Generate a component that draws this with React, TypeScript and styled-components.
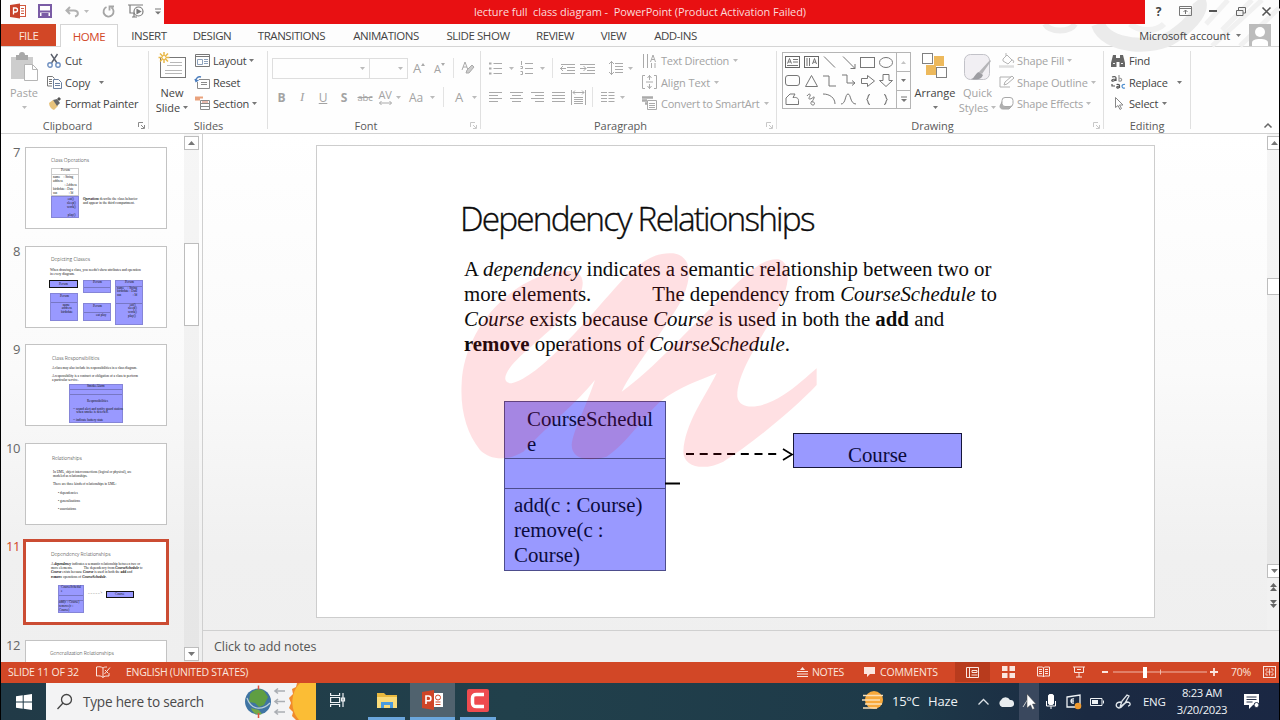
import React from "react";
import styled, { createGlobalStyle } from "styled-components";

const UI = `"Open Sans", "Noto Sans", "Liberation Sans", sans-serif`;
const SERIF = `"Liberation Serif", "Times New Roman", serif`;
const ORANGE = "#d24726";
const DIM = "#a3a3a3";
const INK = "#444444";

const Global = createGlobalStyle`
  * { box-sizing: border-box; }
  html, body { margin: 0; padding: 0; background: #000; overflow: hidden; }
  svg { display: block; flex: none; overflow: visible; }
`;

const Screen = styled.div`
  width: 1280px;
  height: 720px;
  padding: 0 1px;
  background: #000;
  display: flex;
  flex-direction: column;
  overflow: hidden;
  font-family: ${UI};
  font-size: 11px;
  letter-spacing: -0.2px;
  color: ${INK};
  white-space: nowrap;
`;

/* ---------- title bar and tabs ---------- */

const Header = styled.header`
  position: relative;
  background: #fdfdfd;
  height: 47px;
  flex: none;
  border-bottom: 1px solid #d5d5d5;
`;
const Swirls = styled.svg`
  position: absolute;
  left: 0;
  top: 0;
`;
const TitleRow = styled.div`
  position: relative;
  display: flex;
  height: 24px;
`;
const QuickAccess = styled.div`
  width: 163px;
  flex: none;
  display: flex;
  align-items: center;
  height: 22px;
`;
const IconCell = styled.div<{ $w: number; $h?: number; $bg?: string }>`
  width: ${(p) => p.$w}px;
  height: ${(p) => (p.$h ? `${p.$h}px` : "auto")};
  background: ${(p) => p.$bg || "transparent"};
  flex: none;
  display: flex;
  align-items: center;
  justify-content: center;
`;
const Gap = styled.div<{ $w: number }>`
  width: ${(p) => p.$w}px;
  flex: none;
`;
const TitleBanner = styled.div`
  width: 981px;
  flex: none;
  height: 24px;
  background: #e81012;
  color: #fbdada;
  display: flex;
  align-items: center;
  justify-content: center;
  padding: 0 29px 2px 0;
  font-size: 11px;
  letter-spacing: -0.08px;
  white-space: pre;
`;
const WindowButtons = styled.div`
  display: flex;
  align-items: center;
  height: 22px;
`;
const TabRow = styled.div`
  position: relative;
  display: flex;
  height: 23px;
`;
const Tab = styled.div<{ $w: number; $kind?: "file" | "active" }>`
  width: ${(p) => p.$w}px;
  height: ${(p) => (p.$kind === "file" ? 22 : 23)}px;
  flex: none;
  display: flex;
  align-items: center;
  justify-content: center;
  font-size: 11.5px;
  letter-spacing: -0.45px;
  color: ${(p) => (p.$kind === "file" ? "#fbe3dc" : p.$kind === "active" ? ORANGE : "#444")};
  background: ${(p) => (p.$kind === "file" ? ORANGE : p.$kind === "active" ? "#fff" : "transparent")};
  border: ${(p) => (p.$kind === "active" ? "1px solid #d5d5d5" : "0 solid transparent")};
  border-bottom: 0;
  margin-right: ${(p) => (p.$kind === "file" ? 4 : 0)}px;
`;
const Account = styled.div`
  margin-left: auto;
  display: flex;
  align-items: center;
  gap: 6px;
  letter-spacing: -0.08px;
  padding-bottom: 1px;
`;
const Avatar = styled.div`
  width: 32px;
  height: 22px;
  padding-left: 2px;
`;

/* ---------- ribbon ---------- */

const Ribbon = styled.div`
  height: 87px;
  flex: none;
  background: #fefefe;
  border-bottom: 1px solid #d2d2d2;
  display: flex;
`;
const Group = styled.section<{ $w: number }>`
  width: ${(p) => p.$w}px;
  flex: none;
  display: flex;
  flex-direction: column;
  position: relative;
  &::after {
    content: "";
    position: absolute;
    right: 0;
    top: 4px;
    bottom: 4px;
    width: 1px;
    background: #e0e0e0;
  }
`;
const GroupBody = styled.div`
  height: 69px;
  flex: none;
  padding-top: 3px;
  display: flex;
`;
const GroupCaption = styled.div<{ $shift?: number }>`
  height: 17px;
  flex: none;
  line-height: 20px;
  display: flex;
  justify-content: center;
  color: #5a5a5a;
  letter-spacing: -0.05px;
  padding-right: ${(p) => p.$shift || 0}px;
`;
const Launcher = styled.svg`
  position: absolute;
  right: 4px;
  bottom: 4px;
`;
const BigButton = styled.div<{ $w: number; $dim?: boolean }>`
  width: ${(p) => p.$w}px;
  flex: none;
  color: ${(p) => (p.$dim ? DIM : INK)};
  display: flex;
  flex-direction: column;
  align-items: center;
  letter-spacing: 0;
`;
const BigIcon = styled.div`
  height: 36px;
  padding-top: 2px;
`;
const BigText = styled.div`
  height: 14.5px;
  line-height: 14px;
  display: flex;
  align-items: center;
  gap: 3px;
`;
const Stack = styled.div<{ $ml?: number; $dim?: boolean }>`
  display: flex;
  flex-direction: column;
  margin-left: ${(p) => p.$ml || 0}px;
  color: ${(p) => (p.$dim ? DIM : INK)};
`;
const SmallButton = styled.div<{ $gap?: number; $ls?: number }>`
  height: 21.4px;
  display: flex;
  align-items: center;
  gap: ${(p) => p.$gap ?? 4}px;
  letter-spacing: ${(p) => p.$ls ?? -0.2}px;
`;
const SmallIcon = styled.div`
  width: 18px;
  flex: none;
`;
const Lines = styled.div<{ $pl: number }>`
  padding-left: ${(p) => p.$pl}px;
  display: flex;
  flex-direction: column;
`;
const ToolLine = styled.div<{ $h: number }>`
  height: ${(p) => p.$h}px;
  display: flex;
  align-items: center;
  color: ${DIM};
`;
const Combo = styled.div<{ $w: number }>`
  width: ${(p) => p.$w}px;
  height: 21px;
  border: 1px solid #dedede;
  margin-right: -1px;
  display: flex;
  align-items: center;
  justify-content: flex-end;
  padding-right: 4px;
`;
const Glyph = styled.span<{ $b?: boolean; $i?: boolean; $u?: boolean; $strike?: boolean; $size?: number }>`
  font-size: ${(p) => p.$size || 12}px;
  font-weight: ${(p) => (p.$b ? 700 : 400)};
  font-style: ${(p) => (p.$i ? "italic" : "normal")};
  font-family: ${(p) => (p.$i ? SERIF : UI)};
  text-decoration: ${(p) => (p.$u ? "underline" : p.$strike ? "line-through" : "none")};
`;
const Spacing = styled.div`
  display: flex;
  flex-direction: column;
  align-items: center;
  line-height: 10px;
  gap: 1px;
`;
const VRule = styled.div<{ $ml: number; $mr: number }>`
  width: 1px;
  height: 20px;
  background: #e3e3e3;
  flex: none;
  margin: 0 ${(p) => p.$mr}px 0 ${(p) => p.$ml}px;
`;
const Gallery = styled.div`
  width: 129px;
  height: 57px;
  margin: 2px 0 0 5px;
  border: 1px solid #b5b5b5;
  display: flex;
  flex: none;
`;
const ShapeGrid = styled.div`
  width: 113px;
  display: grid;
  grid-template-columns: repeat(6, 18.8px);
  grid-template-rows: 18px 19px 18px;
  place-items: center;
`;
const GalleryScroll = styled.div`
  flex: 1;
  display: grid;
  grid-template-rows: 1fr 1fr 1fr;
`;
const GalleryButton = styled.div`
  border-left: 1px solid #b5b5b5;
  display: flex;
  align-items: center;
  justify-content: center;
  & + & { border-top: 1px solid #b5b5b5; }
`;
const RibbonEnd = styled.div`
  flex: 1;
  display: flex;
  justify-content: flex-end;
  align-items: flex-end;
  padding: 0 7px 5px 0;
`;

/* ---------- workspace ---------- */

const Workspace = styled.div`
  height: 528px;
  flex: none;
  display: flex;
  background: linear-gradient(#ffffff, #fafafa 45%, #f0f0f0 80%, #efefef);
`;
const ThumbPanel = styled.aside`
  width: 183px;
  height: 528px;
  overflow: hidden;
  padding-top: 13px;
  display: flex;
  flex-direction: column;
  gap: 16.5px;
`;
const ThumbRow = styled.div`
  display: flex;
  height: 82px;
  flex: none;
`;
const ThumbNo = styled.div<{ $on?: boolean }>`
  width: 19px;
  margin-right: 5px;
  text-align: right;
  font-size: 13px;
  line-height: 14px;
  margin-top: -2px;
  letter-spacing: -0.4px;
  color: ${(p) => (p.$on ? ORANGE : "#666")};
  flex: none;
`;
const Thumb = styled.div<{ $on?: boolean }>`
  position: relative;
  width: 142px;
  height: 82px;
  background: #fff;
  flex: none;
  overflow: hidden;
  font-family: ${SERIF};
  letter-spacing: 0;
  color: #111;
  outline: ${(p) => (p.$on ? `3px solid #cb4c33` : "1px solid #c3c3c3")};
  outline-offset: -1px;
`;
/* Objects placed freely on a thumbnail's slide surface. */
const MiniText = styled.div<{ $x: number; $y: number; $s?: number; $title?: boolean }>`
  position: absolute;
  left: ${(p) => p.$x}px;
  top: ${(p) => p.$y}px;
  font-size: ${(p) => p.$s || 3.3}px;
  line-height: 1.2;
  font-family: ${(p) => (p.$title ? UI : SERIF)};
  font-weight: ${(p) => (p.$title ? 300 : 400)};
  white-space: pre;
`;
const MiniBox = styled.div<{ $x: number; $y: number; $w: number; $h: number; $line?: string; $plain?: boolean }>`
  position: absolute;
  left: ${(p) => p.$x}px;
  top: ${(p) => p.$y}px;
  width: ${(p) => p.$w}px;
  height: ${(p) => p.$h}px;
  background: ${(p) => (p.$plain ? "#fff" : "#9999ff")};
  border: ${(p) => p.$line || "1px solid #8585d8"};
`;
const MiniRule = styled.div<{ $y: number; $pale?: boolean }>`
  margin-top: ${(p) => p.$y}px;
  height: 1px;
  background: ${(p) => (p.$pale ? "#ccc" : "#7777c4")};
`;
const ScrollBar = styled.div<{ $w: number }>`
  width: ${(p) => p.$w}px;
  flex: none;
  display: flex;
  flex-direction: column;
  background: rgba(0, 0, 0, 0.035);
  overflow: hidden;
`;
const ScrollButton = styled.div<{ $mt: number; $h?: number }>`
  height: ${(p) => p.$h || 14}px;
  margin-top: ${(p) => p.$mt}px;
  width: 15px;
  border: 1px solid #bdbdbd;
  background: #fff;
  flex: none;
  display: flex;
  align-items: center;
  justify-content: center;
`;
const PageButtons = styled.div`
  flex: 1;
  background: #f1f1f1;
  padding: 5px 0 0 3px;
`;
const Divider = styled.div`
  width: 1px;
  background: #cfcfcf;
  margin-left: 3px;
  flex: none;
`;
const Stage = styled.main`
  flex: 1;
  display: flex;
  flex-direction: column;
`;
const EditRow = styled.div`
  height: 496px;
  display: flex;
`;
const SlideArea = styled.div`
  flex: 1;
  padding: 11px 0 0 113px;
`;
const Slide = styled.div`
  position: relative;
  width: 839px;
  height: 473px;
  background: #fff;
  border: 1px solid #cdcdcd;
  color: #0c0c0c;
`;
const SlideTitle = styled.h1`
  position: absolute;
  left: 143px;
  top: 48px;
  margin: 0;
  font-size: 33.4px;
  line-height: 48px;
  font-weight: 300;
  letter-spacing: -1.82px;
  -webkit-text-stroke: 0.35px #0c0c0c;
`;
const SlideBody = styled.p`
  position: absolute;
  left: 147px;
  top: 111px;
  margin: 0;
  font-family: ${SERIF};
  font-size: 20.83px;
  line-height: 25px;
  letter-spacing: 0;
  white-space: pre;
`;
const TabStop = styled.span`
  display: inline-block;
  width: 61px;
`;
const UmlClass = styled.div`
  position: absolute;
  left: 187px;
  top: 255px;
  width: 162px;
  height: 170px;
  background: #9999ff;
  border: 1px solid #4d4d8c;
  color: #0b0b3c;
  font-family: ${SERIF};
  font-size: 20.83px;
  line-height: 25px;
  letter-spacing: 0;
  white-space: pre;
`;
const UmlName = styled.div`
  height: 57px;
  padding: 5px 0 0 22px;
  border-bottom: 1px solid #4d4d8c;
`;
const UmlAttributes = styled.div`
  height: 30px;
  border-bottom: 1px solid #4d4d8c;
`;
const UmlOperations = styled.div`
  padding: 4px 0 0 9px;
`;
const UmlTarget = styled.div`
  position: absolute;
  left: 476px;
  top: 287px;
  width: 169px;
  height: 35px;
  background: #9999ff;
  border: 1px solid #16163a;
  color: #0b0b3c;
  font-family: ${SERIF};
  font-size: 20.83px;
  letter-spacing: 0;
  line-height: 42px;
  text-align: center;
`;
const Overlay = styled.svg`
  position: absolute;
  left: -1px;
  top: -1px;
`;
const Notes = styled.div`
  height: 32px;
  border-top: 1px solid #d0d0d0;
  background: #f0efef;
  padding-left: 11px;
  line-height: 31px;
  font-size: 12.5px;
  letter-spacing: -0.05px;
  color: #555;
`;

/* ---------- status bar and task bar ---------- */

const StatusBar = styled.footer`
  height: 21px;
  flex: none;
  background: #d24726;
  color: #fbe6df;
  display: flex;
  align-items: center;
  font-size: 10.5px;
  padding-bottom: 1px;
`;
const StatusText = styled.div<{ $w: number; $ls?: number }>`
  width: ${(p) => p.$w}px;
  flex: none;
  letter-spacing: ${(p) => p.$ls ?? -0.3}px;
`;
const Spacer = styled.div`
  flex: 1;
`;
const Taskbar = styled.footer`
  height: 37px;
  flex: none;
  display: flex;
  background: linear-gradient(90deg, #213a47 0, #21404b 40%, #1e3a49 70%, #1b2a42 85%, #1a2743);
  color: #eef2f5;
`;
const SearchBox = styled.div`
  width: 270px;
  background: #f3f3f4;
  display: flex;
  align-items: center;
  padding-left: 11px;
  color: #4a4a4a;
  font-size: 13.6px;
  letter-spacing: -0.22px;
  gap: 11px;
`;
const SearchArt = styled.div`
  margin-left: auto;
`;
const TaskButton = styled.div<{ $w: number; $ml: number; $on?: boolean; $open?: boolean }>`
  width: ${(p) => p.$w}px;
  margin-left: ${(p) => p.$ml}px;
  height: 37px;
  display: flex;
  align-items: center;
  justify-content: center;
  background: ${(p) => (p.$on ? "#50626e" : "transparent")};
  border-bottom: 3px solid ${(p) => (p.$open ? "#6ba6dc" : "transparent")};
`;
const TrayText = styled.div<{ $w: number; $size?: number; $ls?: number }>`
  width: ${(p) => p.$w}px;
  line-height: 37px;
  font-size: ${(p) => p.$size || 13}px;
  letter-spacing: ${(p) => p.$ls ?? -0.3}px;
`;
const Clock = styled.div`
  width: 64px;
  text-align: center;
  font-size: 11.3px;
  letter-spacing: -0.35px;
  line-height: 16.5px;
  padding-top: 2px;
`;

/* ---------- drawing helpers ---------- */

type SvgProps = { w: number; h: number; children: React.ReactNode; c?: string; sw?: number };
const Ico = ({ w, h, children, c = "#777", sw = 1 }: SvgProps) => (
  <svg width={w} height={h} viewBox={`0 0 ${w} ${h}`} fill="none" stroke={c} strokeWidth={sw}>
    {children}
  </svg>
);
const Caret = ({ c = "#777" }: { c?: string }) => (
  <svg width="5" height="3" viewBox="0 0 5 3">
    <path d="M0 0h5L2.5 3z" fill={c} />
  </svg>
);
const LaunchIcon = ({ c = "#8a8a8a" }: { c?: string }) => (
  <Launcher width="7" height="7" viewBox="0 0 7 7" fill="none" stroke={c}>
    <path d="M.5 5V.5H5M3 3l3 3M6.5 3v3.5H3" />
  </Launcher>
);
const Up = () => (
  <svg width="7" height="4" viewBox="0 0 7 4"><path d="M0 4h7L3.5 0z" fill="#777" /></svg>
);
const Down = () => (
  <svg width="7" height="4" viewBox="0 0 7 4"><path d="M0 0h7L3.5 4z" fill="#777" /></svg>
);

const shapes: React.ReactNode[] = [
  <Ico w={15} h={12} c="#666"><rect x=".5" y=".5" width="14" height="11" /><path d="M2.500 7.500L4.500 2.500l2 5M3.200 6h2.600M8 3.500h5M8 6h5M2 9.500h11" strokeWidth=".9" /></Ico>,
  <Ico w={15} h={12} c="#666"><rect x=".5" y=".5" width="14" height="11" /><path d="M3 2v8M5.500 2v8M8.500 8l2-5.500 2 5.500M9.200 6.200h2.600" strokeWidth=".9" /></Ico>,
  <Ico w={13} h={12}><path d="M1 .5l11 11" /></Ico>,
  <Ico w={14} h={13}><path d="M1 .5l12 12M8.500 12.500H13V8" /></Ico>,
  <Ico w={15} h={11}><rect x=".5" y=".5" width="14" height="10" /></Ico>,
  <Ico w={14} h={11}><ellipse cx="7" cy="5.500" rx="6.500" ry="5" /></Ico>,
  <Ico w={15} h={11}><rect x=".5" y=".5" width="14" height="10" rx="2.500" /></Ico>,
  <Ico w={13} h={12}><path d="M6.500 .5l6 11H.5z" /></Ico>,
  <Ico w={13} h={12}><path d="M0 1h6v10h7" /></Ico>,
  <Ico w={14} h={13}><path d="M0 1h5v8h8M10 6.500l3 2.500-3 2.500" /></Ico>,
  <Ico w={14} h={12}><path d="M.5 3.500h6V.5l7 5.500-7 5.500v-3h-6z" /></Ico>,
  <Ico w={14} h={13}><path d="M4 .5h6v6h3.500L7 12.500.5 6.500H4z" /></Ico>,
  <Ico w={14} h={12}><path d="M1 11.500V5l4-4h5L8 4.500c4-.5 5.500 1 5.500 3v4z" /></Ico>,
  <Ico w={10} h={13}><path d="M1 3c2-3 4-2 3 0S2 6 4 6s5-4 4-1-3 4-1 4 2 3 0 3-3-2-1-4" /></Ico>,
  <Ico w={13} h={12}><path d="M0 1c7 0 12 4 12 10" /></Ico>,
  <Ico w={15} h={12}><path d="M0 11C5 11 4 1 7 1s2 10 8 10" /></Ico>,
  <Ico w={4} h={11}><path d="M4 .5C1 .5 3 5 .5 5.500 3 6 1 10.500 4 10.500" strokeWidth="1.200" /></Ico>,
  <Ico w={4} h={11}><path d="M0 .5c3 0 1 4.500 3.500 5C1 6 3 10.500 0 10.500" strokeWidth="1.200" /></Ico>,
];

const tabs: [string, number][] = [
  ["INSERT", 62], ["DESIGN", 64], ["TRANSITIONS", 95], ["ANIMATIONS", 94],
  ["SLIDE SHOW", 90], ["REVIEW", 64], ["VIEW", 53], ["ADD-INS", 71],
];

const Bars = ({ rows, w = 13 }: { rows: [number, number][]; w?: number }) => (
  <Ico w={w} h={11} c="#aaa">
    {rows.map(([a, b], i) => <path key={i} d={`M${a} ${i * 3 + 0.5}H${b}`} />)}
  </Ico>
);
const Dash = () => <Caret c="#bbb" />;

const HeaderBar = () => (
  <Header>
    <Swirls width="1278" height="46" viewBox="1 0 1278 46" fill="none">
      <path d="M1045 24a16 10 0 0 0 30 0" stroke="#ececec" strokeWidth="6" />
      <path d="M1098 24c8 24 56 26 76 12 20-14 30-28 24-36" stroke="#ebebeb" strokeWidth="14" />
      <path d="M1130 24c10 8 26 8 34 0" stroke="#f1f1f1" strokeWidth="6" />
      <path d="M1206 24l22-24M1222 30l30-30M1212 46l50-46M1240 46l39-38" stroke="#f1f1f1" strokeWidth="5" />
    </Swirls>
    <TitleRow>
      <QuickAccess>
        <IconCell $w={33}>
          <Ico w={16} h={16} c="none">
            <rect x="8" y="2.500" width="7.500" height="11" fill="#fff" stroke="#d0593f" />
            <path d="M0 2L10 .5v15L0 14z" fill="#c8432b" />
            <path d="M3.500 11.500V5h2a2 2 0 0 1 0 4h-2" stroke="#fff" strokeWidth="1.300" />
            <path d="M11 5.500h3M11 8h3M11 10.500h3" stroke="#d0593f" />
          </Ico>
        </IconCell>
        <IconCell $w={21}>
          <Ico w={14} h={14} c="#7a5ca5" sw={2}><path d="M1 1h12v12H1z" /><path d="M1 7.500h12" /><path d="M4.500 13v-3h5v3" fill="#7a5ca5" /></Ico>
        </IconCell>
        <Gap $w={10} />
        <Ico w={14} h={11} c="#b1b1b1" sw={2}><path d="M5 1L1.500 4.500 5 8M2 4.500h7c5 0 5 5 1 6" /></Ico>
        <Gap $w={5} />
        <Dash />
        <Gap $w={13} />
        <Ico w={13} h={13} c="#a5a5a5" sw={1.8}><path d="M9.500 2.500a5 5 0 1 1-5-.5M7.500 5.500V1.500H12" /></Ico>
        <Gap $w={13} />
        <Ico w={16} h={14} c="#7c7c7c" sw={1.200}><path d="M0 1h15M2 1v8h4M4 13h5M6 9v4" /><circle cx="10.500" cy="7.500" r="4.500" /><path d="M9 5.500v4l3.500-2z" fill="#7c7c7c" /></Ico>
        <Gap $w={11} />
        <Ico w={6} h={7} c="#777"><path d="M0 1h6" /><path d="M0 3.500h6L3 6.500z" fill="#777" stroke="none" /></Ico>
      </QuickAccess>
      <TitleBanner>lecture full  class diagram -  PowerPoint (Product Activation Failed)</TitleBanner>
      <WindowButtons>
        <IconCell $w={27}><Glyph $b>?</Glyph></IconCell>
        <IconCell $w={27}><Ico w={13} h={10} c="#777"><path d="M.5.5h12v9H.5zM.5 2.500h12M6.500 8V4M4.500 6l2-2 2 2" /></Ico></IconCell>
        <IconCell $w={28}><Ico w={8} h={2} c="#555" sw={2}><path d="M0 1h8" /></Ico></IconCell>
        <IconCell $w={27}><Ico w={10} h={9} c="#666"><path d="M.5 3.500h6.500v5H.5zM2.500 3V.5h7V6H7" /></Ico></IconCell>
        <IconCell $w={25}><Ico w={9} h={9} c="#555" sw={1.600}><path d="M.5.5l8 8M8.500.5l-8 8" /></Ico></IconCell>
      </WindowButtons>
    </TitleRow>
    <TabRow>
      <Tab $w={55} $kind="file">FILE</Tab>
      <Tab $w={58} $kind="active">HOME</Tab>
      {tabs.map(([t, w]) => <Tab key={t} $w={w}>{t}</Tab>)}
      <Account>
        <span>Microsoft account</span>
        <Caret />
        <Avatar>
          <Ico w={22} h={22} c="none"><path d="M0 0h22v22H0z" fill="#bcbcbc" /><circle cx="11" cy="8" r="5" fill="#fff" /><path d="M3 22v-3c0-3 3-4 8-4s8 1 8 4v3z" fill="#fff" /></Ico>
        </Avatar>
      </Account>
    </TabRow>
  </Header>
);

const RibbonBar = () => (
  <Ribbon>
    <Group $w={148}>
      <GroupBody>
        <BigButton $w={46} $dim>
          <BigIcon>
            <Ico w={27} h={30} c="none">
              <path d="M0 5h22v22H0z" fill="#cdcdcd" /><path d="M5 3h3a3 3 0 0 1 6 0h3v5H5z" fill="#a8a8a8" />
              <path d="M13.500 12.500h8l5 5v11h-13z" fill="#fff" stroke="#b5b5b5" /><path d="M21.500 12.500v5h5" stroke="#b5b5b5" />
            </Ico>
          </BigIcon>
          <BigText>Paste</BigText>
          <BigText><Dash /></BigText>
        </BigButton>
        <Stack>
          <SmallButton $gap={0}>
            <SmallIcon><Ico w={14} h={14} c="#5a5f6b" sw={1.400}><path d="M4 0l6 9M10.500 0l-6 9" /><circle cx="3" cy="11" r="2.200" stroke="#6e8fc0" /><circle cx="11" cy="11" r="2.200" stroke="#6e8fc0" /></Ico></SmallIcon>
            Cut
          </SmallButton>
          <SmallButton $gap={0}>
            <SmallIcon><Ico w={15} h={13} c="#777"><path d="M5 10H.5V.5h5l2 2M2 3.500h3M2 5.500h3M2 7.500h3" /><path d="M6.500 3.500h5l3 3v6h-8zM8 7.500h5M8 9.500h5" stroke="#6a7f9e" /></Ico></SmallIcon>
            Copy<IconCell $w={22}><Caret /></IconCell>
          </SmallButton>
          <SmallButton $gap={0} $ls={-0.25}>
            <SmallIcon><Ico w={15} h={13} c="none"><path d="M2 6l4-3 5 6-4 4C4 12 2 9 2 6z" fill="#e8c37c" /><path d="M6 3l4-1 3 4-3 3z" fill="#666" /><path d="M10 2l2-2 2 2-2 2z" fill="#555" /></Ico></SmallIcon>
            Format Painter
          </SmallButton>
        </Stack>
      </GroupBody>
      <GroupCaption $shift={15}>Clipboard</GroupCaption>
      <LaunchIcon />
    </Group>

    <Group $w={119}>
      <GroupBody>
        <BigButton $w={46}>
          <BigIcon>
            <Ico w={29} h={28} c="#777">
              <rect x="2.500" y="5.500" width="25" height="20" fill="#fff" /><path d="M12 10.500h12M9 13.500h15M7 18.500h17M7 21.500h17" stroke="#b8b8b8" />
              <path d="M6 0v11M.5 5.500h11M2 1.500l8 8M10 1.500l-8 8" stroke="#e9b949" strokeWidth="1.500" /><circle cx="6" cy="5.500" r="2" fill="#fff" stroke="#e9b949" />
            </Ico>
          </BigIcon>
          <BigText>New</BigText>
          <BigText>Slide<Caret /></BigText>
        </BigButton>
        <Stack>
          <SmallButton $gap={3}>
            <Ico w={15} h={13} c="#777"><path d="M.5.5h14v12H.5zM.5 2.500h14" /><path d="M2.500 5.500h5v5h-5zM9 5.500h4M9 7.500h4M9 9.500h4" stroke="#8ea3bd" /></Ico>
            Layout<Caret />
          </SmallButton>
          <SmallButton $gap={3}>
            <Ico w={15} h={13} c="#8a8a8a"><path d="M4 3.500h10.500v9H2.500V6M6 6.500h6M6 8.500h6" /><path d="M6 1C3 0 1 2 1 5M0 3l1 2.500L3.500 4" stroke="#4b7dbd" strokeWidth="1.400" /></Ico>
            Reset
          </SmallButton>
          <SmallButton $gap={3}>
            <Ico w={15} h={14} c="#8a8a8a"><path d="M0 1.500h8M0 3.500h5" stroke="#e9a27c" strokeWidth="2" /><path d="M5.500 4.500h9v9h-9zM5.500 7.500h9M5.500 10.500h9" /><path d="M7 6h6" stroke="#d4775c" /></Ico>
            Section<Caret />
          </SmallButton>
        </Stack>
      </GroupBody>
      <GroupCaption>Slides</GroupCaption>
    </Group>

    <Group $w={213}>
      <GroupBody>
        <Lines $pl={4}>
          <ToolLine $h={36}>
            <Combo $w={98}><Dash /></Combo>
            <Combo $w={39}><Dash /></Combo>
            <IconCell $w={24}><Glyph $size={13}>A</Glyph><Ico w={4} h={10} c="none"><path d="M0 3h4L2 0z" fill="#aaa" /></Ico></IconCell>
            <IconCell $w={17}><Glyph $size={11}>A</Glyph><Ico w={4} h={10} c="none"><path d="M0 0h4L2 3z" fill="#aaa" /></Ico></IconCell>
            <VRule $ml={5} $mr={5} />
            <IconCell $w={18}><Ico w={14} h={14} c="#aaa"><path d="M1 9L4 1l3 8M2 6h4" /><path d="M6 9l5-5 2 2-5 6-3 0z" fill="#ccc" /></Ico></IconCell>
          </ToolLine>
          <ToolLine $h={22}>
            <IconCell $w={19}><Glyph $b>B</Glyph></IconCell>
            <IconCell $w={22}><Glyph $i $size={13}>I</Glyph></IconCell>
            <IconCell $w={20}><Glyph $u>U</Glyph></IconCell>
            <IconCell $w={22}><Glyph $b>S</Glyph></IconCell>
            <IconCell $w={20}><Glyph $strike $size={9.500}>abc</Glyph></IconCell>
            <IconCell $w={20}>
              <Spacing>
                <Glyph $size={11}>AV</Glyph>
                <Ico w={13} h={4} c="#aaa"><path d="M.5 2h12M2.500 0l-2 2 2 2M10.500 0l2 2-2 2" /></Ico>
              </Spacing>
            </IconCell>
            <IconCell $w={7}><Dash /></IconCell>
            <IconCell $w={28}><Glyph>Aa</Glyph></IconCell>
            <Dash />
            <VRule $ml={8} $mr={7} />
            <IconCell $w={16}><Glyph $size={13}>A</Glyph></IconCell>
            <IconCell $w={14}><Dash /></IconCell>
          </ToolLine>
        </Lines>
      </GroupBody>
      <GroupCaption $shift={17}>Font</GroupCaption>
      <LaunchIcon c="#c8c8c8" />
    </Group>

    <Group $w={296}>
      <GroupBody>
        <Lines $pl={4}>
          <ToolLine $h={36}>
            <Gap $w={4} />
            <Ico w={13} h={14} c="#aaa"><path d="M4.500 2.500H13M4.500 7.500H13M4.500 12.500H13" /><path d="M0 2.500h2.500M0 7.500h2.500M0 12.500h2.500" strokeWidth="2" /></Ico>
            <IconCell $w={18}><Dash /></IconCell>
            <Ico w={14} h={14} c="#aaa"><path d="M5 2.500h8M5 7.500h8M5 12.500h8M1.500 0v4M.5 5.500h2v2h-2M.5 10.500h2v3h-2" /></Ico>
            <IconCell $w={17}><Dash /></IconCell>
            <VRule $ml={1} $mr={7} />
            <Ico w={15} h={11} c="#aaa"><path d="M1 1.500h14M7 4.500h8M7 7.500h8M1 10.500h14M0 5.500h6M3 3L.5 5.500 3 8" /></Ico>
            <Gap $w={5} />
            <Ico w={15} h={11} c="#aaa"><path d="M0 1.500h15M7 4.500h8M7 7.500h8M0 10.500h15M0 5.500h6M3.500 3L6 5.500 3.500 8" /></Ico>
            <Gap $w={14} />
            <Ico w={14} h={14} c="#aaa"><path d="M6 2.500h8M6 5.500h8M6 8.500h8M6 11.500h8M2.500 0v14M0 3l2.500-2.500L5 3M0 11l2.500 2.500L5 11" /></Ico>
            <IconCell $w={14}><Dash /></IconCell>
          </ToolLine>
          <ToolLine $h={22}>
            <IconCell $w={21}><Bars rows={[[0, 13], [0, 9], [0, 13], [0, 9]]} /></IconCell>
            <IconCell $w={21}><Bars rows={[[0, 13], [2, 11], [0, 13], [2, 11]]} /></IconCell>
            <IconCell $w={21}><Bars rows={[[0, 13], [4, 13], [0, 13], [4, 13]]} /></IconCell>
            <IconCell $w={20}><Bars rows={[[0, 13], [0, 13], [0, 13], [0, 13]]} /></IconCell>
            <IconCell $w={21}>
              <Ico w={15} h={15} c="#aaa"><path d="M.5 0v15M14.500 0v15M3 7.500h9M3 9.500h9M3 11.500h9M3 13.500h9M2 2.500h11M4 .5l-2 2 2 2M11 .5l2 2-2 2" /></Ico>
            </IconCell>
            <VRule $ml={3} $mr={8} />
            <Ico w={13} h={11} c="#aaa"><path d="M0 .5h6M0 3.500h6M0 6.500h6M0 9.500h6M7.500 .5h6M7.500 3.500h6M7.500 6.500h6M7.500 9.500h6" /></Ico>
            <IconCell $w={17}><Dash /></IconCell>
          </ToolLine>
        </Lines>
        <Stack $ml={5} $dim>
          <SmallButton $gap={4} $ls={-0.25}>
            <Ico w={15} h={14} c="#aaa"><path d="M1.500 0v14M5.500 0v14M8.500 8l2.500-7 2.500 7M9.500 5.500h3M9.500 9v5M13 9v5" /></Ico>
            Text Direction<Dash />
          </SmallButton>
          <SmallButton $gap={4} $ls={-0.1}>
            <Ico w={15} h={14} c="#aaa"><path d="M3 .5H.5v13H3M12 .5h2.500v13H12M4 7h7M7.500 0v5M7.500 14V9M5.500 3l2-2.500 2 2.500M5.500 11l2 2.500 2-2.500" /></Ico>
            Align Text<Dash />
          </SmallButton>
          <SmallButton $gap={4} $ls={-0.22}>
            <Ico w={15} h={14} c="#aaa"><path d="M0 1.500h11M0 4.500h5M3 7.500h3" strokeWidth="2.500" /><path d="M5.500 4.500h9v9h-9zM7 7.500h6M7 9.500h6M7 11.500h6" /></Ico>
            Convert to SmartArt<Dash />
          </SmallButton>
        </Stack>
      </GroupBody>
      <GroupCaption $shift={17}>Paragraph</GroupCaption>
      <LaunchIcon c="#c8c8c8" />
    </Group>

    <Group $w={327}>
      <GroupBody>
        <Gallery>
          <ShapeGrid>{shapes.map((s, i) => <React.Fragment key={i}>{s}</React.Fragment>)}</ShapeGrid>
          <GalleryScroll>
            <GalleryButton><Ico w={5} h={3} c="none"><path d="M0 3h5L2.500 0z" fill="#c4c4c4" /></Ico></GalleryButton>
            <GalleryButton><Caret /></GalleryButton>
            <GalleryButton><Ico w={6} h={7} c="#777"><path d="M0 1h6" /><path d="M0 3h6L3 6z" fill="#777" stroke="none" /></Ico></GalleryButton>
          </GalleryScroll>
        </Gallery>
        <BigButton $w={48}>
          <BigIcon>
            <Ico w={26} h={27} c="#808080">
              <rect x="12" y="4" width="10" height="10" fill="#edb95c" stroke="none" /><rect x="4" y="13" width="10" height="10" fill="#edb95c" stroke="none" />
              <rect x=".5" y="1.500" width="10" height="10" fill="#fff" /><rect x="14.500" y="15.500" width="10" height="10" fill="#fff" />
            </Ico>
          </BigIcon>
          <BigText>Arrange</BigText>
          <BigText><Caret /></BigText>
        </BigButton>
        <BigButton $w={37} $dim>
          <BigIcon>
            <Ico w={27} h={30} c="#c2c2c8">
              <rect x=".5" y="2.500" width="25" height="25" rx="6" fill="#f1eff3" />
              <path d="M27 9l-9 13-3-2L26 8z" fill="#b5b5b8" stroke="none" /><path d="M15 20l4 3c-2 5-6 5-12 4 4-1 4-6 8-7z" fill="#9d9da2" stroke="none" />
            </Ico>
          </BigIcon>
          <BigText>Quick</BigText>
          <BigText>Styles<Dash /></BigText>
        </BigButton>
        <Stack $ml={3} $dim>
          <SmallButton $gap={3} $ls={-0.15}>
            <Ico w={15} h={15} c="#b5b5b5"><path d="M4 6l4-4 5 5-4 4-5-3zM7 3V0M13 7c2 0 2 2 1 3" /><path d="M0 13.500h15" stroke="#dedede" strokeWidth="2.500" /></Ico>
            Shape Fill<Dash />
          </SmallButton>
          <SmallButton $gap={3} $ls={-0.12}>
            <Ico w={15} h={14} c="#b0b0b0"><path d="M12 2H1v10h10M5 10l1-3 7-6 2 2-7 6z" /></Ico>
            Shape Outline<Dash />
          </SmallButton>
          <SmallButton $gap={3} $ls={-0.22}>
            <Ico w={15} h={13} c="#a8a8a8"><path d="M4 3l-3 6c0 2 1 3 3 3h6l3-3z" fill="#b0b0b0" /><rect x="3" y=".5" width="11" height="9" rx="3" fill="#fff" /></Ico>
            Shape Effects<Dash />
          </SmallButton>
        </Stack>
      </GroupBody>
      <GroupCaption $shift={16}>Drawing</GroupCaption>
      <LaunchIcon c="#c8c8c8" />
    </Group>

    <Group $w={87}>
      <GroupBody>
        <Stack $ml={7}>
          <SmallButton>
            <Ico w={14} h={13} c="none"><path d="M2 1h3v3h4V1h3l2 8v4H8.500V8h-3v5H0V9z" fill="#666" /><path d="M2 9.500h2M10 9.500h2" stroke="#eee" /></Ico>
            Find
          </SmallButton>
          <SmallButton>
            <Ico w={14} h={14} c="#555" sw={1.200}><path d="M1 2c3-1 4 0 4 1v3M5 4c-5 0-5 2-3 2.200L5 5M1 9v2h3" /><path d="M8 0v6c3 1 4-3 0-3" stroke="#999" /><path d="M5.500 9.500c2-.5 3 0 3 1V13M8.500 11c-4 0-3 2.500-1 2L8.500 12" /><path d="M14 9.500c-4-1-4 4.500 0 3.500" stroke="#4e8fd0" /></Ico>
            Replace<IconCell $w={15}><Caret /></IconCell>
          </SmallButton>
          <SmallButton>
            <Ico w={14} h={13} c="#888"><path d="M4.500.5v10l2.500-2 2 4 1.500-1-2-3.500H12z" fill="#fff" /></Ico>
            Select<Caret />
          </SmallButton>
        </Stack>
      </GroupBody>
      <GroupCaption $shift={1}>Editing</GroupCaption>
    </Group>
    <RibbonEnd><Ico w={8} h={5} c="#666" sw={1.500}><path d="M.5 4.500L4 1l3.500 3.500" /></Ico></RibbonEnd>
  </Ribbon>
);

const ThumbList = () => (
  <ThumbPanel>
    <ThumbRow>
      <ThumbNo>7</ThumbNo>
      <Thumb>
        <MiniText $x={26} $y={10} $s={5} $title>Class Operations</MiniText>
        <MiniBox $x={26} $y={21} $w={28} $h={28} $plain $line="1px solid #ccc"><MiniRule $y={5} $pale /></MiniBox>
        <MiniText $x={36} $y={22}>Person</MiniText>
        <MiniText $x={28} $y={29}>{"name    : String\naddress\n              : Address\nbirthdate : Date\nssn              : Id"}</MiniText>
        <MiniBox $x={26} $y={49} $w={28} $h={22} />
        <MiniText $x={42} $y={51}>{" eat()\nsleep()\nwork()\n\n play()"}</MiniText>
        <MiniText $x={58} $y={50} $s={3.500}><b><i>Operations</i></b>{" describe the class behavior\nand appear in the third compartment."}</MiniText>
      </Thumb>
    </ThumbRow>
    <ThumbRow>
      <ThumbNo>8</ThumbNo>
      <Thumb>
        <MiniText $x={26} $y={10} $s={5} $title>Depicting Classes</MiniText>
        <MiniText $x={25} $y={22} $s={3.500}>{"When drawing a class, you needn't show attributes and operation\nin every diagram."}</MiniText>
        <MiniBox $x={24} $y={34} $w={29} $h={8} $line="1px solid #111" />
        <MiniText $x={34} $y={37}>Person</MiniText>
        <MiniBox $x={58} $y={34} $w={28} $h={13}><MiniRule $y={6} /></MiniBox>
        <MiniText $x={68} $y={35}>Person</MiniText>
        <MiniBox $x={90} $y={34} $w={28} $h={45}><MiniRule $y={5} /><MiniRule $y={16} /></MiniBox>
        <MiniText $x={100} $y={35}>Person</MiniText>
        <MiniText $x={92} $y={41}>{"name    : String\nbirthdate : Date\nssn              : Id"}</MiniText>
        <MiniText $x={103} $y={58}>{"  eat()\nsleep()\nwork()\nplay()"}</MiniText>
        <MiniBox $x={25} $y={47} $w={28} $h={28}><MiniRule $y={8} /></MiniBox>
        <MiniText $x={35} $y={49}>Person</MiniText>
        <MiniText $x={36} $y={58}>{"  name\n address\nbirthdate"}</MiniText>
        <MiniBox $x={58} $y={57} $w={28} $h={18}><MiniRule $y={8} /></MiniBox>
        <MiniText $x={68} $y={59}>Person</MiniText>
        <MiniText $x={71} $y={68}>eat play</MiniText>
      </Thumb>
    </ThumbRow>
    <ThumbRow>
      <ThumbNo>9</ThumbNo>
      <Thumb>
        <MiniText $x={27} $y={11} $s={5} $title>Class Responsibilities</MiniText>
        <MiniText $x={27} $y={22} $s={3.400}>A class may also include its responsibilities in a class diagram.</MiniText>
        <MiniText $x={27} $y={30} $s={3.400}>{"A responsibility is a contract or obligation of a class to perform\na particular service."}</MiniText>
        <MiniBox $x={44} $y={40} $w={54} $h={39}><MiniRule $y={4} /><MiniRule $y={4} /></MiniBox>
        <MiniText $x={62} $y={41}>SmokeAlarm</MiniText>
        <MiniText $x={62} $y={56}>Responsibilities</MiniText>
        <MiniText $x={48} $y={63.500} $s={3.300}>{"-- sound alert and notify guard station\n    when smoke is detected.\n\n-- indicate battery state"}</MiniText>
      </Thumb>
    </ThumbRow>
    <ThumbRow>
      <ThumbNo>10</ThumbNo>
      <Thumb>
        <MiniText $x={27} $y={12} $s={5} $title>Relationships</MiniText>
        <MiniText $x={28} $y={27} $s={3.400}>{"In UML, object interconnections (logical or physical), are\nmodeled as relationships."}</MiniText>
        <MiniText $x={28} $y={39} $s={3.400}>There are three kinds of relationships in UML:</MiniText>
        <MiniText $x={33} $y={49}>• dependencies</MiniText>
        <MiniText $x={33} $y={57}>• generalizations</MiniText>
        <MiniText $x={33} $y={65}>• associations</MiniText>
      </Thumb>
    </ThumbRow>
    <ThumbRow>
      <ThumbNo $on>11</ThumbNo>
      <Thumb $on>
        <MiniText $x={26} $y={10} $s={5} $title>Dependency Relationships</MiniText>
        <MiniText $x={26} $y={21} $s={3.500}>
          A <b><i>dependency</i></b>{" indicates a semantic relationship between two or\nmore elements.             The dependency from "}<b><i>CourseSchedule</i></b>{" to\n"}
          <b><i>Course</i></b> exists because <b><i>Course</i></b> is used in both the <b>add</b>{" and\n"}<b>remove</b> operations of <b><i>CourseSchedule</i></b>.
        </MiniText>
        <MiniBox $x={33} $y={44} $w={26} $h={28}><MiniRule $y={9} /><MiniRule $y={4} /></MiniBox>
        <MiniText $x={36} $y={45}>{"CourseSchedul\ne"}</MiniText>
        <MiniText $x={34} $y={60} $s={3.300}>{"add(c : Course)\nremove(c :\nCourse)"}</MiniText>
        <MiniText $x={63} $y={51}>– – – – – &gt;</MiniText>
        <MiniBox $x={81} $y={50} $w={28} $h={7} $line="1px solid #111" />
        <MiniText $x={90} $y={52}>Course</MiniText>
      </Thumb>
    </ThumbRow>
    <ThumbRow>
      <ThumbNo>12</ThumbNo>
      <Thumb><MiniText $x={25} $y={10} $s={5} $title>Generalization Relationships</MiniText></Thumb>
    </ThumbRow>
  </ThumbPanel>
);

const SlideCanvas = () => (
  <Slide>
    <SlideTitle>Dependency Relationships</SlideTitle>
    <SlideBody>
      A <i>dependency</i>{" indicates a semantic relationship between two or\nmore elements."}
      <TabStop />
      The dependency from <i>CourseSchedule</i>{" to\n"}
      <i>Course</i> exists because <i>Course</i> is used in both the <b>add</b>{" and\n"}
      <b>remove</b> operations of <i>CourseSchedule</i>.
    </SlideBody>
    <UmlClass>
      <UmlName>{"CourseSchedul\ne"}</UmlName>
      <UmlAttributes />
      <UmlOperations>{"add(c : Course)\nremove(c :\nCourse)"}</UmlOperations>
    </UmlClass>
    <UmlTarget>Course</UmlTarget>
    <Overlay width="839" height="473" viewBox="316 145 839 473" fill="none">
      <path d="M686 454h94" stroke="#000" strokeWidth="2" strokeDasharray="8 5.700" />
      <path d="M783 449l9 5.500-9 5.500" stroke="#000" strokeWidth="1.700" />
      <path d="M665 483.500h15" stroke="#000" strokeWidth="2" />
      <g transform="translate(440 190) scale(.33333)" fill="#ff0018" fillOpacity=".12">
        <path d="M65 580C70 440 180 290 330 250C400 232 440 245 425 300C405 370 300 440 230 510C190 550 185 580 215 580C300 560 440 390 520 300C590 220 640 185 700 190C750 198 760 245 730 320C690 400 580 530 545 605C640 540 760 400 860 310C930 240 970 205 1015 208C1060 220 1050 300 1000 380C940 480 890 560 892 620C900 665 970 655 1030 615C1070 590 1100 560 1130 535V585C1060 660 930 765 850 815C790 845 730 830 730 785C735 700 790 630 830 550C780 570 720 590 660 635C620 670 560 760 500 800C450 815 395 810 395 765C400 720 430 670 465 570C410 640 330 700 250 785C200 815 150 810 120 780C80 730 60 660 65 580Z" />
      </g>
    </Overlay>
  </Slide>
);

const Status = () => (
  <StatusBar>
    <Gap $w={7} />
    <StatusText $w={88} $ls={-0.18}>SLIDE 11 OF 32</StatusText>
    <Ico w={15} h={12} c="#fbe6df"><path d="M7 2C5 .5 3 .5.5 1v9c3-.5 5 0 6.500 1.500V2c1-1 2-1 4-1M7 11.500C8 10 10 10 13 10V7M8.500 8L14 1.500M9 4l3 3" /></Ico>
    <Gap $w={15} />
    <StatusText $w={140} $ls={-0.27}>ENGLISH (UNITED STATES)</StatusText>
    <Spacer />
    <Ico w={11} h={10} c="#fbe6df"><path d="M0 4.500h11M0 7h11M0 9.500h11" /><path d="M3 3h5L5.500 0z" fill="#fbe6df" stroke="none" /></Ico>
    <Gap $w={4} />
    <StatusText $w={52}>NOTES</StatusText>
    <Ico w={11} h={10} c="none"><path d="M0 0h11v7H6l-3 3V7H0z" fill="#fbe6df" /></Ico>
    <Gap $w={5} />
    <StatusText $w={75} $ls={-0.12}>COMMENTS</StatusText>
    <IconCell $w={35} $h={20} $bg="#b83b1d">
      <Ico w={13} h={11} c="#fbe6df"><path d="M.5.5h12v10H.5zM3.500.5v10M6 3.500h5v2H6zM5.500 8h6" /></Ico>
    </IconCell>
    <IconCell $w={36}><Ico w={13} h={12} c="none"><path d="M0 0h5.500v5H0zM7.500 0H13v5H7.500zM0 7h5.500v5H0zM7.500 7H13v5H7.500z" fill="#fbe6df" /></Ico></IconCell>
    <IconCell $w={35}><Ico w={13} h={12} c="#fbe6df"><path d="M.5 1h5l1 1 1-1h5v9h-5l-1 1-1-1h-5zM6.500 2v9M2 3.500h3M2 5.500h3M2 7.500h3M8 3.500h3M8 5.500h3M8 7.500h3" /></Ico></IconCell>
    <IconCell $w={35}><Ico w={12} h={12} c="#fbe6df"><path d="M0 1h12M1.500 1v5.500h9V1M6 6.500V11M3 11h6M4 3.500h4" /></Ico></IconCell>
    <IconCell $w={17}><Ico w={6} h={2} c="#fbe6df" sw={2}><path d="M0 1h6" /></Ico></IconCell>
    <Ico w={94} h={12} c="#f0b8a8"><path d="M0 6h94M47.500 3.500v5" /><path d="M30 1h4v11h-4z" fill="#fff" stroke="none" /></Ico>
    <IconCell $w={14}><Ico w={8} h={8} c="#fbe6df" sw={1.800}><path d="M0 4h8M4 0v8" /></Ico></IconCell>
    <Gap $w={10} />
    <StatusText $w={32}>70%</StatusText>
    <Ico w={13} h={12} c="#fbe6df"><rect x=".5" y=".5" width="12" height="11" /><path d="M3 5V3h2M8 3h2v2M10 7v2H8M5 9H3V7M6.500 2.500v7M3 6h7" strokeWidth=".8" /></Ico>
    <Gap $w={3} />
  </StatusBar>
);

const WindowsBar = () => (
  <Taskbar>
    <IconCell $w={45}>
      <Ico w={16} h={16} c="none"><path d="M0 2.300L6.700 1.300V7.500H0zM7.700 1.200L16 0v7.500H7.700zM0 8.500h6.700v6.200L0 13.700zM7.700 8.500H16V16l-8.300-1.200z" fill="#fff" /></Ico>
    </IconCell>
    <SearchBox>
      <Ico w={15} h={16} c="#444" sw={1.300}><circle cx="9.500" cy="5.500" r="5" /><path d="M6 9l-5.500 6" /></Ico>
      <span>Type here to search</span>
      <SearchArt>
        <svg width="72" height="37" viewBox="244 683 72 37" fill="none">
          <circle cx="258" cy="701.500" r="13" fill="#3f74a3" />
          <path d="M250 694c4-5 10-6 14-3l4 6-4 8-5 2-4-4-6-1z" fill="#5f9e42" /><path d="M251 708l8 2 3 4c-4 2-9 0-11-6z" fill="#75a848" />
          <path d="M247 698c4 12 15 13 23 5" stroke="#b9cfd8" strokeWidth="1.200" />
          <path d="M258.500 685.500v4M258.500 713v5" stroke="#e0523d" strokeWidth="1.500" />
          <path d="M275 691h10M275 701.500h10M275 712h10M278 688.500l-3 2.500 3 2.500M278 699l-3 2.500 3 2.500M278 709.500l-3 2.500 3 2.500" stroke="#aaaeb3" strokeWidth="1.600" />
          <path d="M316 683h-19l-1 4-4 2 1 5-4 4 2 5-2 5 4 4-1 4 4 4h20z" fill="#f08a2c" />
          <path d="M316 683h-16c-10 10-10 27-1 37h17z" fill="#fbbd35" />
        </svg>
      </SearchArt>
    </SearchBox>
    <TaskButton $w={44} $ml={0}>
      <Ico w={16} h={14} c="#eef2f5" sw={1.200}><path d="M.6 0v2.500h9V0M.6 14v-2.500h9V14M.6 4.500h9v5h-9zM13 0v14M11.500 5h3v3h-3z" /></Ico>
    </TaskButton>
    <TaskButton $w={37} $ml={8} $open>
      <Ico w={20} h={17} c="none"><path d="M0 1h7l2 2h11v13H0z" fill="#e9b93f" /><path d="M0 5h20v11H0z" fill="#fbdc7a" /><path d="M4 16v-6h12v6h-3v-3H7v3z" fill="#4a9be0" /></Ico>
    </TaskButton>
    <TaskButton $w={45} $ml={5} $on $open>
      <Ico w={21} h={20} c="none"><path d="M11 3h10v14H11z" fill="#fff" /><path d="M0 2l12-2v20L0 18z" fill="#cf4527" /><path d="M4 14V6h2.500a2.400 2.400 0 0 1 0 4.800H4" stroke="#fff" strokeWidth="1.600" /><path d="M13.500 12h5M13.500 14.500h5" stroke="#cf4527" /><circle cx="16" cy="7.500" r="2.500" stroke="#cf4527" /></Ico>
    </TaskButton>
    <TaskButton $w={36} $ml={5} $open>
      <Ico w={22} h={23} c="none"><rect width="22" height="23" rx="2" fill="#ee4b4f" /><path d="M17 5.500H9.500c-3 0-4 1-4 4v4c0 3 1 4 4 4H17" stroke="#fff" strokeWidth="3.500" /></Ico>
    </TaskButton>
    <Spacer />
    <IconCell $w={22} $h={34}>
      <Ico w={22} h={19} c="none"><circle cx="12" cy="9" r="9" fill="#f7a93b" /><path d="M1 4.500h20M0 9h18M3 13h17M1 17h14" stroke="#fbe0b5" strokeWidth="1.700" /></Ico>
    </IconCell>
    <Gap $w={8} />
    <TrayText $w={36}>15°C</TrayText>
    <TrayText $w={47} $ls={-0.15}>Haze</TrayText>
    <IconCell $w={17}><Ico w={11} h={6} c="#dde3e8" sw={1.300}><path d="M.5 5.500l5-5 5 5" /></Ico></IconCell>
    <IconCell $w={27}><Ico w={16} h={10} c="none"><path d="M4 10a4 4 0 0 1-1-7 5 5 0 0 1 9 0 3.500 3.500 0 0 1 1 7z" fill="#e8ecef" /></Ico></IconCell>
    <IconCell $w={20} $h={37} $bg="#3a485e">
      <Ico w={14} h={18} c="none"><path d="M1 14l5-8v8" stroke="#ccc" /><path d="M5 1v14l3.500-3 2 4.500 2-1-2-4.500H14z" fill="#fff" stroke="#444" strokeWidth=".5" /></Ico>
    </IconCell>
    <IconCell $w={23}><Ico w={10} h={15} c="#fff"><rect x="2.500" y=".5" width="5" height="10" rx="1.500" fill="#fff" /><path d="M.5 7v5h9V7M5 12v3" /></Ico></IconCell>
    <IconCell $w={23}><Ico w={16} h={15} c="#eef2f5" sw={1.300}><path d="M1 3l13-2v12H1zM8 5c-4-1-4 5 0 4M5 7h3" /><circle cx="12" cy="12" r="3.300" fill="#f09a2e" stroke="none" /></Ico></IconCell>
    <IconCell $w={23}><Ico w={14} h={8} c="#eef2f5"><path d="M.5.500h11.500v7H.5zM13.500 2.500v3" /><path d="M2 2h6v4H2z" fill="#eef2f5" stroke="none" /></Ico></IconCell>
    <IconCell $w={31}><Ico w={16} h={15} c="#dfe5ea" sw={1.300}><path d="M4 13l2-6 5-6 2 1-4 7-5 4M5 8c-6 0-6 5-2 6 4 0 4-5 8-6 4 0 4 4 1 4" /></Ico></IconCell>
    <Gap $w={4} />
    <TrayText $w={27} $size={11.500}>ENG</TrayText>
    <Clock>8:23 AM<br />3/20/2023</Clock>
    <IconCell $w={35}><Ico w={16} h={15} c="none"><path d="M0 0h15v11H9l-4 4v-4H0z" fill="#fff" /><path d="M2.500 3h10M2.500 5.500h10M2.500 8h6" stroke="#26324a" /><circle cx="12.500" cy="11" r="2.500" fill="#fff" stroke="#26324a" /></Ico></IconCell>
    <Gap $w={10} />
  </Taskbar>
);

export default function App() {
  return (
    <>
      <Global />
      <Screen>
        <HeaderBar />
        <RibbonBar />
        <Workspace>
          <ThumbList />
          <ScrollBar $w={15}>
            <ScrollButton $mt={2}><Up /></ScrollButton>
            <ScrollButton $mt={93} $h={83} />
            <ScrollButton $mt={321}><Down /></ScrollButton>
          </ScrollBar>
          <Divider />
          <Stage>
            <EditRow>
              <SlideArea><SlideCanvas /></SlideArea>
              <ScrollBar $w={12}>
                <ScrollButton $mt={2}><Up /></ScrollButton>
                <ScrollButton $mt={128} $h={17} />
                <ScrollButton $mt={269}><Down /></ScrollButton>
                <PageButtons>
                  <Ico w={7} h={24} c="none"><path d="M0 4h7L3.500 0zM0 8h7L3.500 4zM0 17h7l-3.500 4zM0 21h7l-3.500 4z" fill="#666" /></Ico>
                </PageButtons>
              </ScrollBar>
            </EditRow>
            <Notes>Click to add notes</Notes>
          </Stage>
        </Workspace>
        <Status />
        <WindowsBar />
      </Screen>
    </>
  );
}
